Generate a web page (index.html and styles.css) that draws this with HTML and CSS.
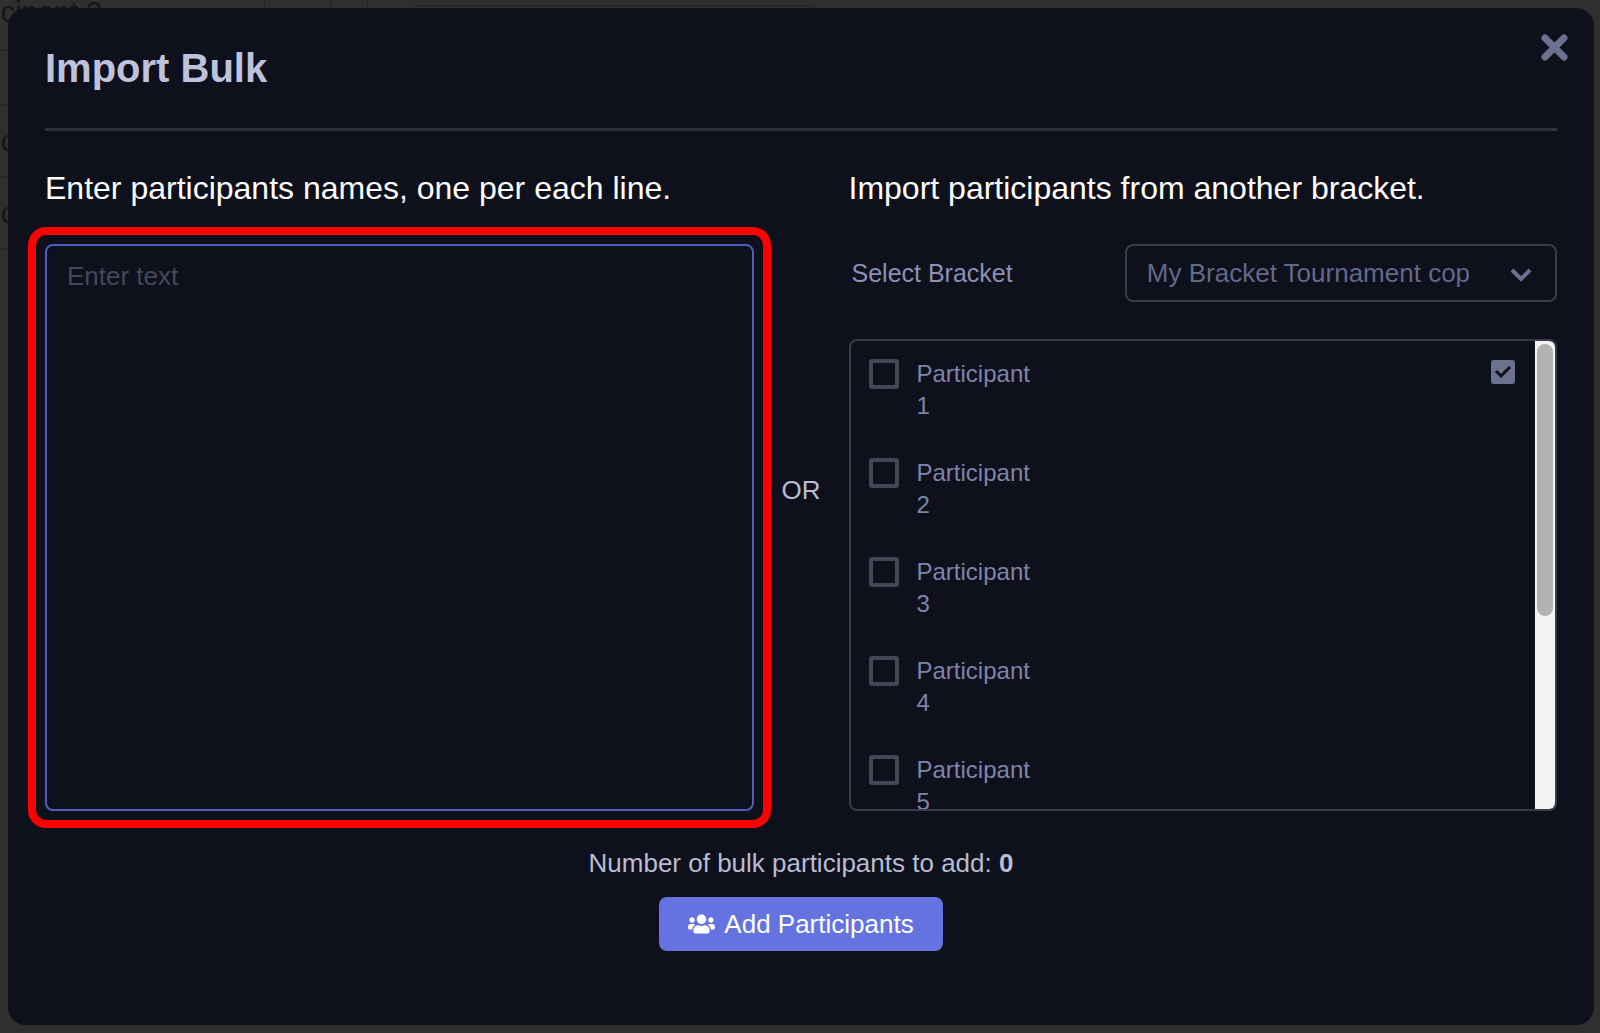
FILE: index.html
```html
<!DOCTYPE html>
<html lang="en">
<head>
<meta charset="utf-8">
<meta name="viewport" content="width=device-width, initial-scale=1">
<title>Import Bulk</title>
<link rel="stylesheet" href="styles.css">
</head>
<body>
<div class="backdrop" aria-hidden="true">
  <div class="back-row back-row-top"><span class="back-name">Participant 2</span><span class="back-cell"></span><span class="back-cell back-cell-narrow"></span><span class="back-field"></span></div>
  <div class="back-row back-row-empty"></div>
  <div class="back-row"><span class="back-name">Participant 3</span></div>
  <div class="back-row"><span class="back-name">Participant 4</span></div>
</div>
<main class="modal" role="dialog" aria-labelledby="title">
  <button class="close" type="button" aria-label="Close">
    <svg viewBox="0 0 27 27" width="27" height="27"><path d="M4 4 23 23M23 4 4 23" fill="none" stroke="currentColor" stroke-width="7" stroke-linecap="round"/></svg>
  </button>
  <header class="modal-head"><h1 id="title">Import Bulk</h1></header>
  <form class="modal-body">
    <div class="columns">
      <section class="column">
        <label class="heading" for="names">Enter participants names, one per each line.</label>
        <div class="names-wrap"><textarea class="names" id="names" placeholder="Enter text"></textarea></div>
      </section>
      <span class="or">OR</span>
      <section class="column">
        <h2 class="heading">Import participants from another bracket.</h2>
        <div class="picker">
          <label class="picker-label" for="bracket">Select Bracket</label>
          <div class="select-wrap">
            <select class="select" id="bracket"><option>My Bracket Tournament copy</option></select>
            <svg class="chevron" viewBox="0 0 22 14" width="22" height="14"><path d="M2 2 11 11 20 2" fill="none" stroke="currentColor" stroke-width="4"/></svg>
          </div>
        </div>
        <div class="list-box">
          <div class="list">
            <ul class="participants">
              <li><label class="participant"><input class="tick" type="checkbox"><span>Participant 1</span></label></li>
              <li><label class="participant"><input class="tick" type="checkbox"><span>Participant 2</span></label></li>
              <li><label class="participant"><input class="tick" type="checkbox"><span>Participant 3</span></label></li>
              <li><label class="participant"><input class="tick" type="checkbox"><span>Participant 4</span></label></li>
              <li><label class="participant"><input class="tick" type="checkbox"><span>Participant 5</span></label></li>
            </ul>
            <button class="select-all" type="button" aria-label="Select all">
              <svg viewBox="0 0 24 24" width="24" height="24"><rect width="24" height="24" rx="3" fill="currentColor"/><path d="M5 11 10 16 19 7" fill="none" stroke="#0e101c" stroke-width="3"/></svg>
            </button>
          </div>
          <div class="track"><div class="thumb"></div></div>
        </div>
      </section>
    </div>
    <footer class="modal-foot">
      <p class="count">Number of bulk participants to add: <strong>0</strong></p>
      <button class="add" type="button">
        <svg viewBox="0 0 640 512" width="27" height="22"><path fill="currentColor" d="M96 224c35.300 0 64-28.700 64-64s-28.700-64-64-64-64 28.700-64 64 28.700 64 64 64zm448 0c35.300 0 64-28.700 64-64s-28.700-64-64-64-64 28.700-64 64 28.700 64 64 64zm32 32h-64c-17.600 0-33.500 7.100-45.100 18.600 40.300 22.100 68.900 62 75.100 109.400h66c17.700 0 32-14.300 32-32v-32c0-35.300-28.700-64-64-64zm-256 0c61.900 0 112-50.100 112-112S381.900 32 320 32 208 82.100 208 144s50.100 112 112 112zm76.800 32h-8.300c-20.800 10-43.900 16-68.500 16s-47.600-6-68.500-16h-8.300C179.600 288 128 339.600 128 403.200V432c0 26.500 21.500 48 48 48h288c26.500 0 48-21.500 48-48v-28.800c0-63.600-51.600-115.200-115.200-115.200zm-223.700-13.400C161.500 263.100 145.600 256 128 256H64c-35.300 0-64 28.700-64 64v32c0 17.700 14.300 32 32 32h65.900c6.300-47.400 34.900-87.300 75.200-109.400z"/></svg>
        Add Participants
      </button>
    </footer>
  </form>
</main>
</body>
</html>
```
FILE: styles.css
```css
*, *::before, *::after { box-sizing: border-box; }

body {
  margin: 0;
  padding: 8px 6px 8px 8px;
  background: #2f2f2f;
  color: #b9bcd3;
  font: 26px/32px "Liberation Sans", Arial, sans-serif;
}

h1, h2, p, ul { margin: 0; padding: 0; }
ul { list-style: none; }
svg { display: block; }
button, select, textarea, input { font: inherit; margin: 0; }
button { border: 0; padding: 0; background: none; cursor: pointer; }

/* Dimmed page behind the dialog */
.backdrop {
  position: absolute;
  top: 0;
  left: 0;
  width: 60%;
  z-index: -1;
  overflow: hidden;
  color: #151515;
  font-size: 29px;
}
.back-row {
  display: flex;
  align-items: center;
  height: 72px;
  border-bottom: 2px solid #272727;
}
.back-row-top { height: 51px; align-items: stretch; }
.back-row-empty { height: 55px; }
.back-name { width: 323px; margin-left: -59px; }
.back-row-top .back-name { line-height: 25px; }
.back-cell { width: 67px; border-left: 1px solid #232323; border-right: 1px solid #232323; }
.back-cell-narrow { width: 37px; border-left: 0; }
.back-field {
  width: 408px;
  margin: 5px 0 0 42px;
  border: 1px solid #232323;
  border-radius: 8px;
}

.modal {
  position: relative;
  min-height: calc(100vh - 16px);
  padding: 36px 37px;
  background: #0e101c;
  border-radius: 18px;
}
.close {
  position: absolute;
  top: 26px;
  right: 26px;
  color: #6d7190;
}
.modal-head { padding-bottom: 36px; border-bottom: 3px solid #2f313f; }
.modal-head h1 {
  color: #bfc2dc;
  font-size: 40px;
  line-height: 48px;
}
.modal-body { padding-top: 37px; }

.columns {
  display: grid;
  grid-template-columns: minmax(0, 1fr) 95px minmax(0, 1fr);
}
.column { display: flex; flex-direction: column; }
.heading {
  margin-bottom: 36px;
  color: #fff;
  font-size: 32px;
  font-weight: 400;
  line-height: 40px;
}
.or { align-self: center; text-align: center; }

.names-wrap { position: relative; display: flex; flex: 1; }
.names-wrap::after {
  content: "";
  position: absolute;
  inset: -17px;
  border: 8px solid #f00;
  border-radius: 18px;
  pointer-events: none;
}
.names {
  flex: 1;
  min-width: 0;
  padding: 14px 20px;
  border: 2px solid #505cbb;
  border-radius: 8px;
  background: transparent;
  color: #b9bcd3;
  outline: 0;
  resize: none;
}
.names::placeholder { color: #44475a; opacity: 1; }

.picker {
  display: flex;
  align-items: center;
  justify-content: space-between;
  margin-bottom: 37px;
}
.picker-label { padding-left: 3px; color: #8b90b5; font-size: 25px; }
.select-wrap { position: relative; width: 61%; }
.select {
  display: block;
  width: 100%;
  height: 58px;
  padding: 0 86px 0 20px;
  border: 2px solid #3a3c4b;
  border-radius: 8px;
  appearance: none;
  background: transparent;
  color: #63688a;
}
.chevron {
  position: absolute;
  top: 24px;
  right: 25px;
  color: #6d7190;
  pointer-events: none;
}

.list-box {
  display: flex;
  height: 472px;
  border: 2px solid #3a3c4b;
  border-radius: 8px;
  overflow: hidden;
}
.list {
  display: flex;
  flex: 1;
  align-items: flex-start;
  justify-content: space-between;
  padding: 17px 20px 0 18px;
  overflow-y: auto;
  scrollbar-width: none;
}
.participants { display: grid; gap: 35px; }
.participant {
  display: flex;
  gap: 18px;
  width: 180px;
  color: #7f84a8;
  font-size: 24px;
}
.tick {
  flex: none;
  width: 30px;
  height: 30px;
  margin-top: 1px;
  border: 4px solid #444656;
  border-radius: 3px;
  appearance: none;
}
.select-all { margin-top: 2px; color: #6d7190; }
.track { width: 20px; padding: 3px 2px; background: #f3f3f3; }
.thumb { height: 272px; border-radius: 8px; background: #b3b3b3; }

.modal-foot {
  display: flex;
  flex-direction: column;
  align-items: center;
  gap: 18px;
  padding-top: 36px;
}
.add {
  display: flex;
  align-items: center;
  gap: 9px;
  height: 54px;
  padding: 0 29px;
  border-radius: 8px;
  background: #6473e0;
  color: #fff;
}
```
